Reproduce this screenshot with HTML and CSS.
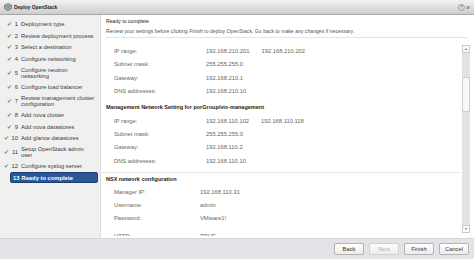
FILE: index.html
```html
<!DOCTYPE html>
<html lang="en">
  <head>
    <meta charset="UTF-8" />
    <meta name="viewport" content="width=device-width, initial-scale=1.0" />
    <link rel="stylesheet" href="styles.css">
  </head>
  <body>
    <div class="dialog">
      <!-- Title bar -->
      <div class="titlebar">
        <svg class="app-icon" width="8" height="8" viewBox="0 0 8 8">
          <path d="M4 0.5 L7.5 2.2 L7.5 5.8 L4 7.5 L0.5 5.8 L0.5 2.2 Z" fill="#9fb0a8" stroke="#5f7468" stroke-width="0.7" />
          <path d="M0.8 2.3 L4 3.9 L7.2 2.3 M4 3.9 L4 7.3" fill="none" stroke="#5f7468" stroke-width="0.6" />
        </svg>
        <span class="title">Deploy OpenStack</span>
        <span class="title-tools">
          <svg width="7" height="7" viewBox="0 0 7 7">
            <circle cx="3.5" cy="3.5" r="3" fill="none" stroke="#8a8a8a" stroke-width="0.7" />
            <text x="3.5" y="5.3" font-size="5" text-anchor="middle" fill="#777" font-family="Liberation Sans">?</text>
          </svg>
          <span class="expand">&#187;</span>
        </span>
      </div>

      <div class="main">
        <!-- Steps -->
        <div class="steps">
          <div class="step"><span class="num"><i class="check">&#10004;</i>1</span><span class="label">Deployment type</span></div>
          <div class="step"><span class="num"><i class="check">&#10004;</i>2</span><span class="label">Review deployment process</span></div>
          <div class="step"><span class="num"><i class="check">&#10004;</i>3</span><span class="label">Select a destination</span></div>
          <div class="step"><span class="num"><i class="check">&#10004;</i>4</span><span class="label">Configure networking</span></div>
          <div class="step"><span class="num"><i class="check">&#10004;</i>5</span><span class="label">Configure neutron<br>networking</span></div>
          <div class="step"><span class="num"><i class="check">&#10004;</i>6</span><span class="label">Configure load balancer</span></div>
          <div class="step"><span class="num"><i class="check">&#10004;</i>7</span><span class="label">Review management cluster<br>configuration</span></div>
          <div class="step"><span class="num"><i class="check">&#10004;</i>8</span><span class="label">Add nova cluster</span></div>
          <div class="step"><span class="num"><i class="check">&#10004;</i>9</span><span class="label">Add nova datastores</span></div>
          <div class="step"><span class="num"><i class="check">&#10004;</i>10</span><span class="label">Add glance datastores</span></div>
          <div class="step"><span class="num"><i class="check">&#10004;</i>11</span><span class="label">Setup OpenStack admin<br>user</span></div>
          <div class="step"><span class="num"><i class="check">&#10004;</i>12</span><span class="label">Configure syslog server</span></div>
          <div class="step active"><span class="num">13</span><span class="label">Ready to complete</span></div>
        </div>

        <!-- Page -->
        <div class="page">
          <div class="page-head">
            <div class="page-title">Ready to complete</div>
            <div class="page-desc">Review your settings before clicking Finish to deploy OpenStack. Go back to make any changes if necessary.</div>
          </div>

          <div class="scroller">
            <div class="scroll-content">
              <div class="section">
                <div class="row"><span class="key">IP range:</span><span class="val">192.168.210.201</span><span class="val">192.168.210.202</span></div>
                <div class="row"><span class="key">Subnet mask:</span><span class="val">255.255.255.0</span></div>
                <div class="row"><span class="key">Gateway:</span><span class="val">192.168.210.1</span></div>
                <div class="row"><span class="key">DNS addresses:</span><span class="val">192.168.210.10</span></div>
              </div>

              <div class="section">
                <div class="section-title">Management Network Setting for porGroup/vio-management</div>
                <div class="row"><span class="key">IP range:</span><span class="val">192.168.110.102</span><span class="val">192.168.110.118</span></div>
                <div class="row"><span class="key">Subnet mask:</span><span class="val">255.255.255.0</span></div>
                <div class="row"><span class="key">Gateway:</span><span class="val">192.168.110.2</span></div>
                <div class="row"><span class="key">DNS addresses:</span><span class="val">192.168.110.10</span></div>
              </div>

              <div class="section nsx">
                <div class="section-title">NSX network configuration</div>
                <div class="row"><span class="key">Manager IP:</span><span class="val">192.168.110.31</span></div>
                <div class="row"><span class="key">Username:</span><span class="val">admin</span></div>
                <div class="row"><span class="key">Password:</span><span class="val">VMware1!</span></div>
                <div class="row last"><span class="key">HTTP:</span><span class="val">TRUE</span></div>
              </div>
            </div>

            <div class="scrollbar">
              <div class="arrow">&#9650;</div>
              <div class="track">
                <div class="thumb"></div>
              </div>
              <div class="arrow">&#9660;</div>
            </div>
          </div>
        </div>
      </div>

      <!-- Footer -->
      <div class="footer">
        <button class="btn">Back</button>
        <button class="btn" disabled>Next</button>
        <button class="btn">Finish</button>
        <button class="btn">Cancel</button>
      </div>
    </div>
  </body>
</html>
```

FILE: styles.css
```css
body {
  margin: 0;
  font-family: "Liberation Sans", Arial, sans-serif;
  font-size: 5.8px;
  color: #333;
  background-color: #fff;
  overflow: hidden;
}

.dialog {
  width: 474px;
  height: 259px;
  display: flex;
  flex-direction: column;
}

/* Title bar */
.titlebar {
  height: 15px;
  box-sizing: border-box;
  display: flex;
  align-items: center;
  padding: 0 4px;
  background: linear-gradient(#f2f2f2, #cdcdcd);
  border-bottom: 1px solid #a9a9a9;
}

.app-icon {
  margin-right: 2px;
}

.title {
  font-weight: bold;
  font-size: 4.9px;
  color: #222;
}

.title-tools {
  margin-left: auto;
  display: flex;
  align-items: center;
  gap: 1px;
}

.expand {
  font-size: 7px;
  color: #777;
  font-weight: bold;
  line-height: 7px;
}

.main {
  flex: 1;
  display: flex;
  min-height: 0;
}

/* Steps */
.steps {
  width: 101px;
  box-sizing: border-box;
  background-color: #f0f0f0;
  border-right: 1px solid #dcdcdc;
  padding-top: 3px;
}

.step {
  display: flex;
  align-items: center;
  min-height: 11.7px;
  box-sizing: border-box;
  padding: 2.2px 0;
  line-height: 6px;
  color: #3a3a3a;
}

.num {
  width: 18px;
  flex-shrink: 0;
  display: flex;
  justify-content: flex-end;
  align-items: center;
  gap: 3px;
  margin-right: 3px;
}

.check {
  font-style: normal;
  color: #5a9e3c;
  font-size: 6px;
}

.step.active {
  margin: 0 2px 0 10px;
  min-height: 10.5px;
  padding: 1.5px 0;
  background-color: #2b5797;
  border: 1px solid #1d3e6e;
  border-radius: 2px;
  color: #fff;
  font-weight: bold;
}

.step.active .num {
  width: auto;
  margin: 0 2px 0 2px;
}

/* Page */
.page {
  flex: 1;
  display: flex;
  flex-direction: column;
  min-width: 0;
}

.page-head {
  margin: 0 6px 0 5px;
  padding: 1px 0 1px;
  border-bottom: 1px solid #e4e4e4;
  line-height: 10px;
  font-size: 5.15px;
}

.page-title {
  color: #222;
}

.page-desc {
  color: #555;
}

.scroller {
  flex: 1;
  display: flex;
  min-height: 0;
}

.scroll-content {
  flex: 1;
  overflow: hidden;
  padding-top: 7px;
  margin-bottom: 2px;
}

.section {
  padding-left: 5px;
}

.section-title {
  font-weight: bold;
  font-size: 5.5px;
  color: #222;
  line-height: 13.4px;
  margin-top: 2.5px;
}

.row {
  display: flex;
  line-height: 13.4px;
  padding-left: 8px;
  color: #666;
}

.key {
  width: 92px;
  flex-shrink: 0;
}

.val {
  margin-right: 12px;
}

.section.nsx {
  margin-top: 3.5px;
  border-top: 1px solid #e6e6e6;
}

.section.nsx .section-title {
  margin-top: 0;
}

.section.nsx .row {
  line-height: 13.2px;
}

.section.nsx .key {
  width: 86px;
}

.section.nsx .row.last {
  margin-top: 4px;
}

/* Scrollbar */
.scrollbar {
  width: 8px;
  margin: 7px 4px 5px 2px;
  display: flex;
  flex-direction: column;
  background-color: #e3e3e3;
}

.arrow {
  height: 8px;
  box-sizing: border-box;
  border: 1px solid #c9c9c9;
  background-color: #fafafa;
  font-size: 3px;
  line-height: 6px;
  text-align: center;
  color: #444;
}

.track {
  flex: 1;
  padding-top: 24px;
}

.thumb {
  height: 35px;
  box-sizing: border-box;
  border: 1px solid #cfcfcf;
  background-color: #f8f8f8;
}

/* Footer */
.footer {
  height: 21px;
  box-sizing: border-box;
  display: flex;
  justify-content: flex-end;
  align-items: center;
  gap: 5px;
  padding-right: 5px;
  background-color: #e3e3e7;
  border-top: 1px solid #d6d6da;
}

.btn {
  width: 30px;
  height: 12px;
  padding: 0;
  font-family: "Liberation Sans", Arial, sans-serif;
  font-size: 5.8px;
  color: #333;
  background: linear-gradient(#ffffff, #ececec);
  border: 1px solid #b3b3b3;
  border-radius: 2px;
}

.btn:disabled {
  color: #b0b0b0;
  border-color: #cfcfcf;
}
```
